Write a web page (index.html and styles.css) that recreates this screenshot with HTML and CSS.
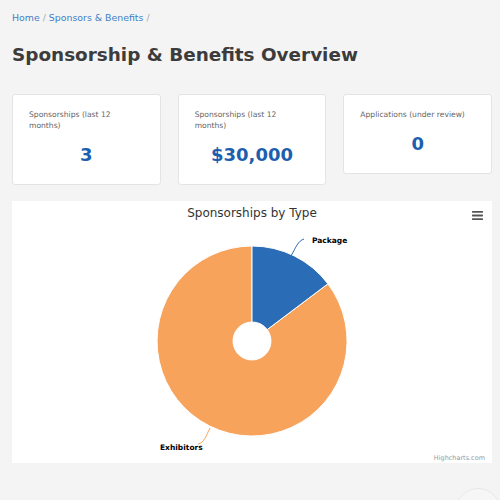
FILE: index.html
```html
<!DOCTYPE html>
<html>
<head>
<meta charset="utf-8">
<link rel="stylesheet" href="styles.css">
</head>
<body>
<div class="page">
  <nav class="crumbs"><a>Home</a> <span class="sep">/</span> <a>Sponsors &amp; Benefits</a> <span class="sep">/</span></nav>
  <h1 class="title">Sponsorship &amp; Benefits Overview</h1>
  <div class="cards">
    <div class="card">
      <div class="card-label">Sponsorships (last 12 months)</div>
      <div class="card-value">3</div>
    </div>
    <div class="card">
      <div class="card-label">Sponsorships (last 12 months)</div>
      <div class="card-value">$30,000</div>
    </div>
    <div class="card">
      <div class="card-label">Applications (under review)</div>
      <div class="card-value">0</div>
    </div>
  </div>
  <div class="chart">
    <svg class="chart-svg" width="480" height="262" viewBox="0 0 480 262">
      <text class="chart-title" x="240" y="16" text-anchor="middle">Sponsorships by Type</text>
      <g class="menu">
        <rect x="460" y="10" width="11" height="1.8" rx="0.6"/>
        <rect x="460" y="13.6" width="11" height="1.8" rx="0.6"/>
        <rect x="460" y="17.2" width="11" height="1.8" rx="0.6"/>
      </g>
      <path d="M240 45 A95 95 0 1 0 315.9 82.8 L255.2 128.6 A19 19 0 1 1 240 121 Z" fill="#f7a35c" stroke="#ffffff" stroke-width="1"/>
      <path d="M240 45 A95 95 0 0 1 315.9 82.8 L255.2 128.6 A19 19 0 0 0 240 121 Z" fill="#2a6db6" stroke="#ffffff" stroke-width="1"/>
      <path d="M279 55 C284 46 286 40 292 38" fill="none" stroke="#2a6db6" stroke-width="1"/>
      <path d="M198 227 C194 235 192 242 186 243" fill="none" stroke="#f7a35c" stroke-width="1"/>
      <text class="dl" x="300" y="42">Package</text>
      <text class="dl" x="148" y="249">Exhibitors</text>
      <text class="credit" x="473" y="259" text-anchor="end">Highcharts.com</text>
    </svg>
  </div>
</div>
<div class="to-top"></div>
</body>
</html>
```
FILE: styles.css
```css
html, body {
  margin: 0;
  padding: 0;
  background: #f4f4f4;
  font-family: "DejaVu Sans", "Open Sans", sans-serif;
  overflow: hidden;
}
.page {
  padding: 11px 8px 0 12px;
}
.crumbs {
  font-size: 9.4px;
  line-height: 13px;
  color: #aaa;
}
.crumbs a {
  color: #3f7fc9;
}
.title {
  margin: 18px 0 0 0;
  font-size: 18.4px;
  line-height: 26px;
  font-weight: bold;
  color: #3c3c3c;
}
.cards {
  margin-top: 26px;
  display: flex;
  align-items: flex-start;
  gap: 17px;
}
.card {
  flex: 1;
  background: #fff;
  border: 1px solid #e4e4e4;
  border-radius: 3px;
  padding: 14px 16px 17px 16px;
}
.card-label {
  font-size: 7.6px;
  line-height: 11px;
  color: #666;
}
.card-value {
  margin-top: 12px;
  text-align: center;
  font-size: 18px;
  line-height: 24px;
  font-weight: bold;
  color: #1d5fae;
}
.chart {
  margin-top: 16px;
  width: 480px;
  height: 262px;
  background: #fff;
}
.chart-svg {
  display: block;
  font-family: "DejaVu Sans", "Open Sans", sans-serif;
}
.chart-title {
  font-size: 12px;
  fill: #333;
}
.menu rect {
  fill: #555;
}
.dl {
  font-size: 7.5px;
  font-weight: bold;
  fill: #000;
}
.credit {
  font-size: 6.5px;
  fill: #999;
}
.to-top {
  position: fixed;
  left: 455px;
  top: 488px;
  width: 44px;
  height: 44px;
  border-radius: 50%;
  border: 1px solid #e6e6e6;
  background: #f6f6f6;
}
```
